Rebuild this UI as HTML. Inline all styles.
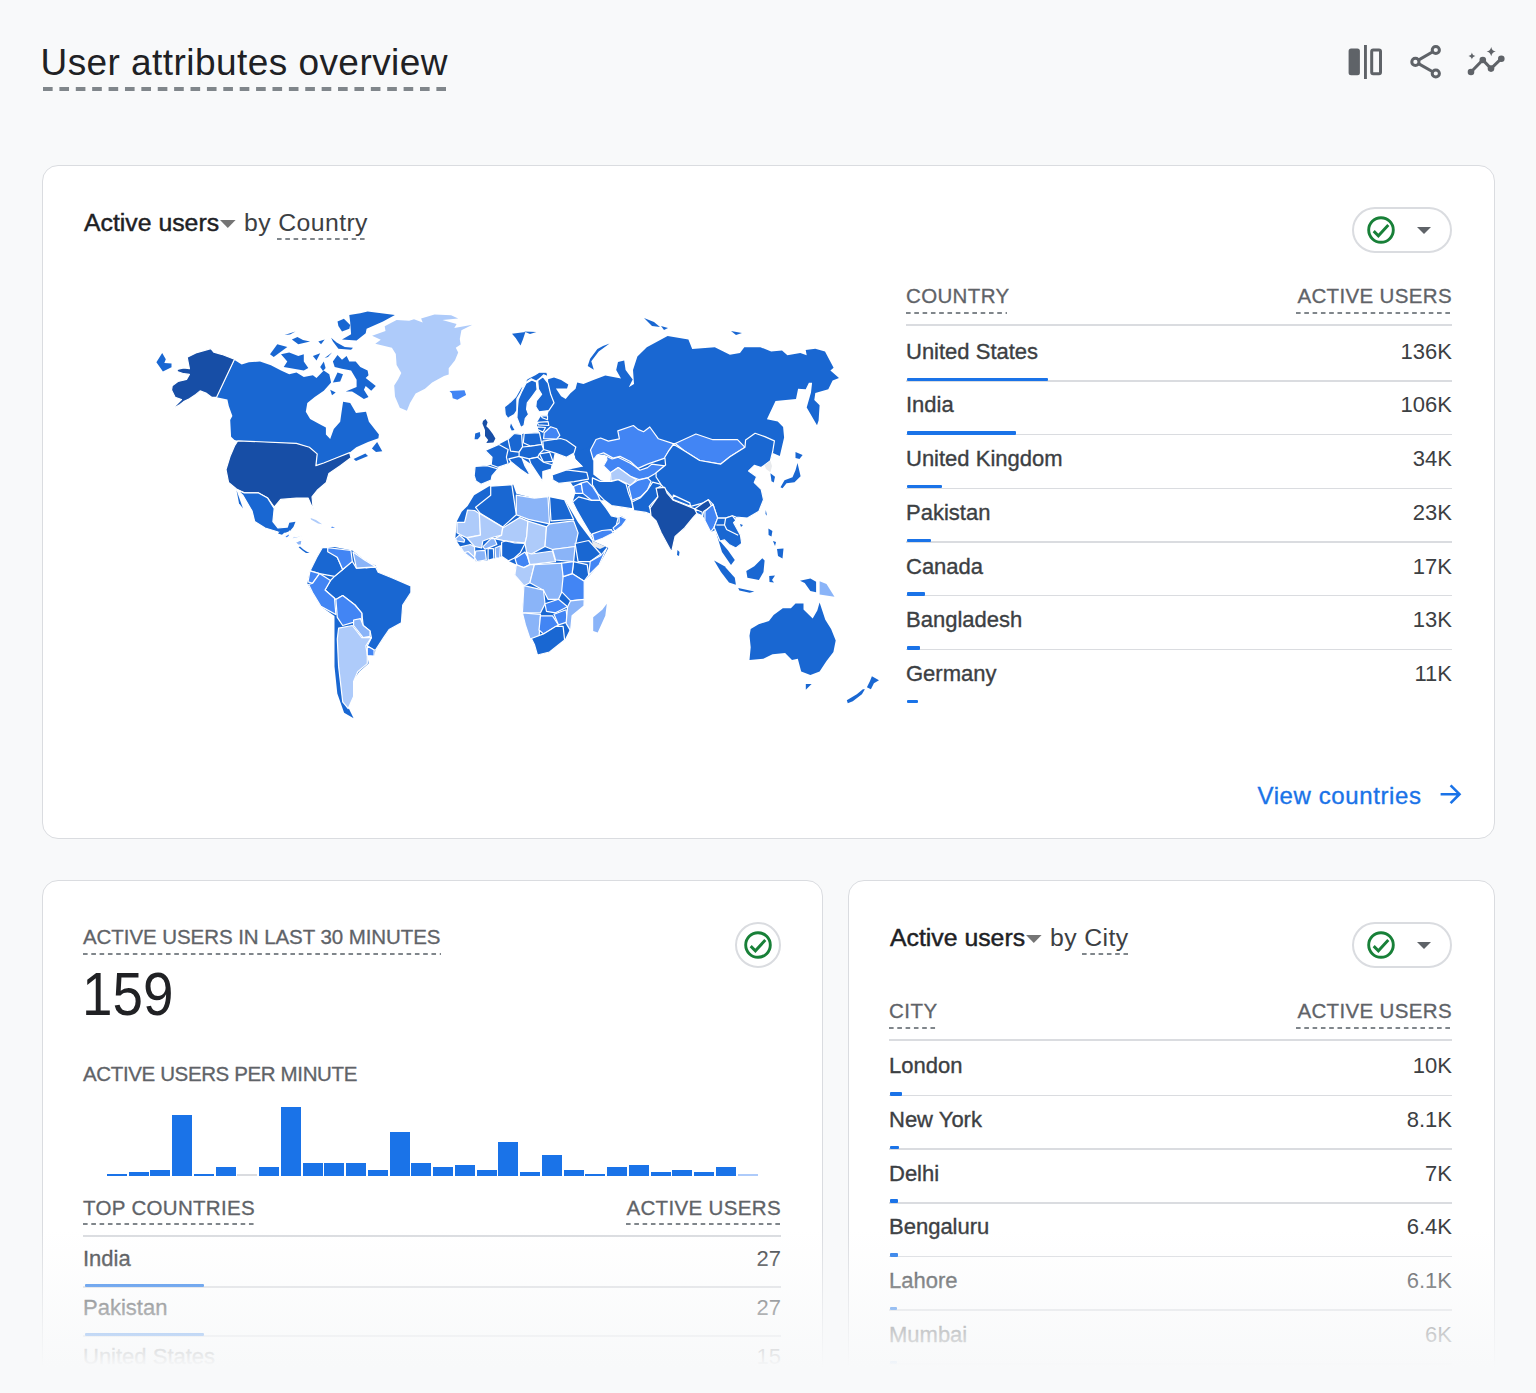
<!DOCTYPE html>
<html><head><meta charset="utf-8">
<style>
*{margin:0;padding:0;box-sizing:border-box}
html,body{width:1536px;height:1393px;overflow:hidden;background:#f8f9fa;font-family:"Liberation Sans",sans-serif;position:relative}
.a{position:absolute;white-space:nowrap}
.card{position:absolute;background:#fff;border:1.5px solid #dadce0;border-radius:16px}
.dash{position:absolute;height:2px;background:linear-gradient(to right,#80868b 5px,transparent 5px) repeat-x;background-size:8.3px 2px}
.hline{position:absolute;height:1.5px;background:#dadce0}
.bar{position:absolute;height:3.5px;background:#1a73e8;border-radius:1px}
.hdr{font-size:20.5px;letter-spacing:0.35px;color:#5f6368;line-height:24px;-webkit-text-stroke:0.3px #5f6368}
.row{font-size:22px;color:#3c4043;line-height:26px;-webkit-text-stroke:0.35px #3c4043}
.val{font-size:22px;color:#3c4043;line-height:26px}
.ttl{font-size:24.8px;color:#202124;line-height:28px}
</style></head><body>

<!-- page title -->
<div class="a" id="title" style="left:40.5px;top:41px;font-size:37px;letter-spacing:0.44px;color:#202124;line-height:44px">User attributes overview</div>
<div class="a" style="left:43px;top:87px;width:405px;height:4px;background:linear-gradient(to right,#80868b 10px,transparent 10px) repeat-x;background-size:16.4px 4px"></div>

<!-- header icons -->
<svg class="a" style="left:1340px;top:40px" width="180" height="45" viewBox="1340 40 180 45">
 <g fill="#5f6368">
  <rect x="1348.6" y="48.6" width="11.3" height="26.6" rx="2.5"/>
  <rect x="1364" y="45" width="2.9" height="34"/>
  <rect x="1371.7" y="50.1" width="8.8" height="23.6" rx="1.5" fill="none" stroke="#5f6368" stroke-width="3"/>
 </g>
 <g stroke="#5f6368" stroke-width="3" fill="none">
  <line x1="1415.4" y1="61.9" x2="1435.8" y2="50"/>
  <line x1="1415.4" y1="61.9" x2="1435.8" y2="73.5"/>
  <circle cx="1435.8" cy="50" r="3.6" fill="#f8f9fa"/>
  <circle cx="1415.4" cy="61.9" r="3.6" fill="#f8f9fa"/>
  <circle cx="1435.8" cy="73.5" r="3.6" fill="#f8f9fa"/>
 </g>
 <g fill="#5f6368">
  <polyline points="1471,72 1482.8,60 1491,68.6 1501.3,58.7" fill="none" stroke="#5f6368" stroke-width="3"/>
  <circle cx="1471" cy="72" r="3.3"/><circle cx="1482.8" cy="60" r="3.3"/><circle cx="1491" cy="68.6" r="3.3"/><circle cx="1501.3" cy="58.7" r="3.3"/>
  <path d="M1491.2 47 Q1492 51 1495.8 51.6 Q1492 52.4 1491.2 56.2 Q1490.4 52.4 1486.6 51.6 Q1490.4 51 1491.2 47Z"/>
  <path d="M1471.9 52.5 Q1472.4 55.5 1475.4 56 Q1472.4 56.5 1471.9 59.5 Q1471.4 56.5 1468.4 56 Q1471.4 55.5 1471.9 52.5Z"/>
 </g>
</svg>

<!-- CARD 1 -->
<div class="card" style="left:42px;top:165px;width:1453px;height:674px"></div>
<svg class="a" style="left:220px;top:220px" width="15.6" height="8" viewBox="0 0 15.6 8"><path d="M0 0H15.6L7.8 8Z" fill="#757575"/></svg>
<div class="a ttl" id="t1" style="left:84px;top:209.1px;-webkit-text-stroke:0.45px #202124">Active users</div>
<div class="a ttl" id="t1b" style="left:244px;top:209.1px;color:#3c4043;letter-spacing:0.4px">by Country</div>
<div class="dash" style="left:277px;top:238px;width:91px"></div>

<!-- pill -->
<div class="a" style="left:1352px;top:207px;width:100px;height:46px;border:2px solid #dadce0;border-radius:23px"></div>

<svg class="a" style="left:1364.5px;top:213.7px" width="32" height="32" viewBox="1364.5 213.7 32 32"><circle cx="1380.5" cy="229.7" r="12.3" fill="none" stroke="#188038" stroke-width="2.9"/><polyline points="1373.2,230.79999999999998 1377.9,235.5 1387.8,224.79999999999998" fill="none" stroke="#188038" stroke-width="2.9"/></svg><svg class="a" style="left:1417px;top:227px" width="14" height="7" viewBox="0 0 14 7"><path d="M0 0H14L7.0 7Z" fill="#5f6368"/></svg>
<svg class="a" style="left:130px;top:290px" width="760" height="440" viewBox="130 290 760 440">
<polygon fill="#1967d2" points="234.5,360.0 241.7,364.4 248.9,362.2 260.0,361.5 270.9,365.2 281.0,370.6 289.2,374.3 296.5,372.4 303.8,377.0 312.9,375.2 316.5,377.9 323.8,370.6 329.3,374.3 331.1,382.5 323.8,390.7 314.7,397.1 307.3,403.1 305.8,411.7 310.1,418.9 320.2,424.6 325.9,427.5 325.9,434.6 330.2,438.9 333.8,428.9 340.2,421.7 341.6,411.7 343.1,401.7 350.2,403.1 356.0,413.1 366.0,411.7 368.9,421.7 378.9,434.6 378.4,438.2 368.0,442.1 356.3,447.3 349.7,452.6 336.7,457.8 323.7,463.0 315.9,465.6 317.2,453.9 309.4,447.3 296.4,443.4 237.8,440.8 234.5,440.0 231.1,436.7 230.2,420.0 232.4,415.9 228.8,405.9 227.4,399.5 216.6,397.3"/>
<polygon fill="#1967d2" points="353.6,459.0 365.4,453.5 368.0,456.0 356.0,461.0"/>
<polygon fill="#1967d2" points="371.9,448.6 377.1,442.1 382.3,451.2 376.0,452.0"/>
<polygon fill="#1967d2" points="332.9,361.5 337.5,355.1 342.0,359.7 346.6,356.0 349.3,361.5 355.7,361.5 360.3,367.0 367.6,370.6 368.5,375.2 365.7,377.9 375.8,386.1 371.2,390.7 365.7,386.1 363.9,389.8 368.5,397.1 363.9,398.9 356.6,394.3 352.1,391.6 345.7,391.6 356.6,387.0 356.6,379.7 351.1,370.6 342.0,368.8 334.7,367.0"/>
<polygon fill="#1967d2" points="349.3,315.0 360.3,313.2 367.6,311.4 394.9,315.0 383.0,321.4 366.6,328.7 365.7,333.3 356.6,340.5 342.0,339.6 351.1,334.2 350.2,322.3"/>
<polygon fill="#1967d2" points="337.5,321.4 343.9,318.7 350.2,325.1 349.3,328.7 342.0,331.4 338.4,326.0"/>
<polygon fill="#1967d2" points="331.1,337.8 336.6,342.4 344.8,346.9 353.0,347.8 351.1,349.7 338.4,348.8 332.9,341.5"/>
<polygon fill="#1967d2" points="281.0,354.2 289.2,352.4 298.3,356.0 303.8,354.2 303.8,361.5 308.3,367.9 303.8,370.6 283.7,367.0 287.3,361.5"/>
<polygon fill="#1967d2" points="270.0,354.2 277.3,344.2 287.3,346.9 273.7,357.0"/>
<polygon fill="#1967d2" points="284.6,335.1 295.5,331.4 290.0,334.5"/>
<polygon fill="#1967d2" points="291.9,339.6 297.4,336.9 303.0,340.0 310.1,341.5 298.3,344.2"/>
<polygon fill="#1967d2" points="318.3,341.5 324.7,339.6 321.1,344.2"/>
<polygon fill="#1967d2" points="312.9,356.0 320.2,353.3 316.5,360.6"/>
<polygon fill="#1967d2" points="324.7,357.9 332.0,352.4 328.0,357.0"/>
<polygon fill="#1967d2" points="320.2,367.0 323.8,361.5 325.6,367.9 323.0,371.0"/>
<polygon fill="#1967d2" points="337.5,372.4 343.0,374.3 340.2,381.6 332.9,382.5"/>
<polygon fill="#1967d2" points="330.2,389.8 335.7,392.5 332.0,395.2"/>
<polygon fill="#174ea6" stroke="#fff" stroke-width="1.2" stroke-linejoin="round" points="187.2,357.2 195.8,352.9 210.9,348.6 213.8,352.2 221.6,354.3 234.5,359.3 216.6,397.3 211.6,397.3 205.9,393.0 200.1,390.9 195.8,394.4 189.4,398.7 183.7,401.6 180.1,404.5 171.5,409.5 181.5,399.5 175.1,397.3 171.5,390.1 172.2,385.8 177.9,381.5 186.5,379.4 189.4,374.4 183.7,373.7 177.2,371.5 177.2,369.4 183.7,368.0 189.4,368.6 188.0,361.5"/>
<polygon fill="#1967d2" points="162.2,352.9 165.8,359.3 164.3,362.9 171.5,363.6 171.5,367.2 162.9,371.5 156.4,362.2"/>
<polygon fill="#174ea6" stroke="#fff" stroke-width="1.2" stroke-linejoin="round" points="237.8,440.8 296.4,443.4 309.4,447.3 317.2,453.9 315.9,465.6 323.7,463.0 336.7,457.8 349.7,452.6 351.0,457.8 340.6,465.6 328.9,473.4 326.3,482.5 317.2,490.3 312.0,496.8 313.3,509.8 308.1,498.1 296.4,498.1 280.7,499.4 274.2,507.2 267.7,498.1 258.6,492.9 244.3,492.9 236.5,489.0 228.6,482.5 226.0,469.5 230.0,456.5 234.5,446.0"/>
<polygon fill="#1967d2" stroke="#fff" stroke-width="1.2" stroke-linejoin="round" points="237.8,490.3 244.3,492.9 258.6,492.9 267.7,498.1 274.2,508.5 272.9,521.6 278.1,528.0 289.8,526.8 295.0,521.6 291.1,530.7 285.9,533.3 278.1,532.0 265.1,528.0 254.7,521.6 252.1,511.1 243.0,495.5"/>
<polygon fill="#1967d2" points="236.5,490.3 243.0,508.5 239.0,503.3"/>
<polygon fill="#1967d2" points="289.3,522.7 295.5,521.7 293.4,526.9 289.8,531.0 285.1,532.1 282.0,534.7 278.0,533.5 281.0,530.0 287.7,527.9"/>
<polygon fill="#4285f4" stroke="#fff" stroke-width="1.2" stroke-linejoin="round" points="284.6,536.2 288.2,534.2 289.8,531.0 289.3,536.2 286.7,538.3"/>
<polygon fill="#8ab4f8" stroke="#fff" stroke-width="1.2" stroke-linejoin="round" points="291.4,537.3 301.2,535.7 301.2,536.8 293.4,538.9"/>
<polygon fill="#8ab4f8" stroke="#fff" stroke-width="1.2" stroke-linejoin="round" points="295.5,542.5 302.3,538.9 301.2,545.1 298.1,545.1"/>
<polygon fill="#1967d2" points="298.6,547.2 300.0,546.5 303.5,549.5 306.5,551.5 309.6,552.9 306.0,553.0 302.8,550.8"/>
<polygon fill="#aecbfa" points="310.6,518.0 316.0,520.0 322.1,524.3 318.0,523.5 311.0,519.5"/>
<polygon fill="#4285f4" points="332.0,526.4 335.1,527.9 331.0,527.8"/>
<polygon fill="#aecbfa" points="372.1,335.8 385.5,331.1 384.7,326.3 396.6,320.0 409.2,320.8 414.0,319.2 422.7,322.4 421.1,318.4 434.5,314.5 451.1,315.3 458.2,318.4 442.4,320.0 456.6,324.0 454.3,327.9 472.4,324.7 461.4,330.3 459.8,339.0 460.6,344.5 455.8,347.7 458.2,352.4 455.0,360.3 448.7,368.2 448.7,374.5 444.0,376.1 432.1,382.4 425.0,388.7 415.6,393.5 410.0,403.0 406.9,410.8 399.8,407.7 395.0,396.6 394.2,385.6 398.2,379.2 401.3,372.9 396.6,365.0 395.8,354.0 391.9,347.7 375.3,343.7 380.8,339.8"/>
<polygon fill="#4285f4" points="449.5,391.1 464.5,390.3 466.1,395.0 457.4,399.8 452.7,398.2 451.9,393.5"/>
<polygon fill="#1967d2" points="322.3,547.7 334.5,547.0 352.3,550.5 364.5,560.0 375.5,565.5 378.2,572.3 391.8,577.7 410.9,585.9 410.9,592.7 402.7,605.0 401.4,622.7 389.1,629.5 383.6,637.7 375.5,650.0 374.1,655.5 367.3,655.5 368.6,663.6 359.1,671.8 353.6,680.0 352.3,693.6 348.2,707.3 353.6,718.2 344.1,712.7 337.3,693.6 334.5,666.4 334.5,639.0 334.5,615.9 320.9,606.4 312.7,592.7 307.3,583.2 310.0,570.9 316.8,557.3"/>
<polygon fill="#1967d2" stroke="#fff" stroke-width="1.2" stroke-linejoin="round" points="342.7,569.5 352.3,561.4 356.4,568.2 375.5,566.8 378.2,572.3 391.8,577.7 410.9,585.9 410.9,592.7 402.7,605.0 401.4,622.7 389.1,629.5 383.6,637.7 375.5,650.0 374.1,650.0 367.3,645.9 371.4,637.7 370.0,630.9 363.2,625.5 361.8,613.2 355.0,605.0 342.7,595.5 335.9,599.5 325.0,590.0 330.5,580.5 334.5,576.4"/>
<polygon fill="#1967d2" stroke="#fff" stroke-width="1.2" stroke-linejoin="round" points="316.8,557.3 322.3,547.7 327.7,547.7 337.3,557.3 342.7,569.5 334.5,576.4 319.5,573.6 310.0,570.9"/>
<polygon fill="#aecbfa" stroke="#fff" stroke-width="1.2" stroke-linejoin="round" points="364.0,558.0 371.0,563.0 375.5,566.8 366.0,568.0"/>
<polygon fill="#4285f4" stroke="#fff" stroke-width="1.2" stroke-linejoin="round" points="327.7,547.7 350.9,550.5 352.3,561.4 342.7,569.5 337.3,557.3 327.7,551.8"/>
<polygon fill="#8ab4f8" stroke="#fff" stroke-width="1.2" stroke-linejoin="round" points="353.0,552.0 364.5,560.0 375.5,566.8 356.4,568.2"/>
<polygon fill="#4285f4" stroke="#fff" stroke-width="1.2" stroke-linejoin="round" points="310.0,570.9 319.5,573.6 312.7,583.2 308.0,581.8"/>
<polygon fill="#4285f4" stroke="#fff" stroke-width="1.2" stroke-linejoin="round" points="319.5,573.6 330.5,580.5 325.0,590.0 334.5,598.2 335.9,614.5 320.9,606.4 312.7,592.7 308.6,584.5 312.7,583.2"/>
<polygon fill="#4285f4" stroke="#fff" stroke-width="1.2" stroke-linejoin="round" points="335.9,599.5 342.7,595.5 355.0,605.0 361.8,613.2 361.8,622.7 352.3,622.7 342.7,625.5 337.3,617.3"/>
<polygon fill="#8ab4f8" stroke="#fff" stroke-width="1.2" stroke-linejoin="round" points="353.6,620.0 360.5,618.6 363.2,625.5 370.0,630.9 370.0,636.4 363.2,637.7 353.6,625.5"/>
<polygon fill="#aecbfa" stroke="#fff" stroke-width="1.2" stroke-linejoin="round" points="338.6,628.2 352.3,625.5 361.8,637.7 371.4,637.7 365.9,645.9 367.3,655.5 367.3,663.6 357.7,671.8 353.6,681.4 353.6,696.4 348.2,708.6 342.7,701.8 338.6,666.4 337.3,639.0"/>
<polygon fill="#4285f4" stroke="#fff" stroke-width="1.2" stroke-linejoin="round" points="367.3,645.9 374.1,650.0 374.1,656.1 367.3,655.5"/>
<polygon fill="#1967d2" points="548.1,379.3 554.0,377.4 561.1,380.0 568.3,384.5 567.0,388.4 555.9,388.4 561.1,396.2 565.7,398.9 570.2,393.4 575.6,388.8 577.2,382.5 583.4,384.0 592.8,380.2 605.3,375.5 621.0,378.6 616.2,370.0 618.0,362.0 624.2,360.4 625.6,370.0 632.7,379.4 628.8,387.2 634.0,384.0 633.0,370.0 637.4,356.6 646.8,347.2 667.6,335.9 688.4,339.6 692.2,349.1 714.8,347.2 729.9,354.7 740.0,353.1 744.3,347.2 760.4,347.2 771.2,351.5 782.0,350.4 787.4,355.3 800.3,353.1 806.7,355.3 805.7,349.9 815.3,348.8 825.0,351.5 833.6,367.7 830.4,370.4 839.0,377.9 832.6,380.6 828.3,389.2 815.3,393.0 814.3,400.0 819.6,405.3 818.6,420.4 817.0,425.3 806.7,407.5 811.0,392.4 812.1,382.7 808.9,382.7 805.7,389.2 798.1,388.7 796.0,398.9 775.5,401.0 766.9,419.3 777.7,421.5 783.1,426.9 784.1,437.6 779.8,455.9 772.3,452.7 772.7,451.5 770.4,460.7 761.2,467.6 754.3,465.3 748.6,471.0 756.6,476.8 754.3,482.5 761.2,489.4 763.5,499.7 758.9,511.2 747.4,518.1 735.9,517.0 733.6,522.7 740.5,535.3 741.7,543.4 735.9,548.0 729.0,544.5 724.5,539.9 719.9,541.0 727.9,550.2 734.8,560.0 731.0,565.0 722.0,552.0 715.3,530.0 710.7,531.9 704.9,519.2 701.5,513.5 696.9,513.5 693.2,517.5 684.6,527.9 675.1,536.5 671.6,552.0 661.3,533.0 656.1,521.0 652.7,515.0 645.8,512.4 633.8,510.6 632.9,508.9 621.7,507.2 611.4,505.5 604.5,500.3 606.2,508.1 611.4,515.8 618.2,517.5 620.8,515.8 626.9,519.2 621.7,526.1 614.8,531.3 613.1,533.0 602.7,538.2 594.1,541.6 589.0,531.3 582.9,521.0 576.9,510.6 572.6,502.0 575.2,493.4 573.4,486.5 570.0,481.4 570.0,471.0 558.9,483.4 552.9,480.0 552.1,474.9 566.5,469.9 583.4,466.5 575.8,459.0 574.1,452.9 566.5,457.2 554.6,452.9 552.9,461.4 552.1,464.8 551.3,469.0 542.8,471.6 542.8,481.7 537.7,474.1 530.9,463.9 522.0,458.0 525.0,466.0 529.2,473.2 528.4,474.9 519.9,469.0 512.0,462.0 510.6,461.4 508.1,463.9 497.9,467.3 497.9,469.0 492.0,475.8 491.2,480.0 481.0,484.2 475.9,480.9 474.2,475.8 475.1,466.5 486.9,465.6 491.2,464.8 492.0,457.2 485.2,450.4 498.8,444.5 508.1,439.4 514.0,433.5 521.6,434.3 524.2,433.5 539.4,432.6 537.1,426.8 537.1,422.3 541.0,415.8 547.5,415.8 548.8,410.6 554.0,402.8 550.7,394.3 548.1,383.2"/>
<polygon fill="#1967d2" points="574.0,452.9 591.0,446.0 597.0,455.0 593.3,459.8 593.3,474.5 592.4,477.9 588.5,479.2 586.8,472.4 583.4,466.5 575.8,459.0"/>
<polygon fill="#ffffff" points="593.3,459.8 597.0,455.0 605.3,454.6 607.0,459.8 603.6,465.8 610.5,472.7 610.5,482.2 601.0,480.5 593.3,474.5"/>
<polygon fill="#ffffff" points="600.2,500.3 604.5,500.3 611.4,505.5 618.0,507.0 614.0,511.0 611.4,515.8 606.2,508.1"/>
<polygon fill="#1967d2" stroke="#fff" stroke-width="1.2" stroke-linejoin="round" points="504.5,406.7 510.4,402.1 515.6,396.9 520.8,387.8 527.3,378.7 535.1,374.8 539.0,372.2 546.8,372.2 548.1,376.7 543.6,374.8 541.0,377.4 536.4,381.3 531.2,378.7 524.7,383.2 520.8,392.3 516.9,398.9 516.9,410.6 514.3,414.5 507.8,418.4 505.2,414.5"/>
<polygon fill="#1967d2" stroke="#fff" stroke-width="1.2" stroke-linejoin="round" points="518.2,399.5 521.4,392.3 526.0,383.2 531.8,380.0 536.4,381.9 537.1,389.7 533.2,395.0 527.3,402.8 526.6,409.3 528.6,414.5 525.3,418.4 524.0,425.5 520.8,427.5 516.9,417.7 517.5,407.3"/>
<polygon fill="#1967d2" stroke="#fff" stroke-width="1.2" stroke-linejoin="round" points="537.7,380.6 542.9,376.7 548.1,383.2 550.7,394.3 554.0,402.8 548.8,410.6 539.0,411.9 535.8,406.7 536.4,400.8 541.6,394.3 538.4,389.1"/>
<polygon fill="#1967d2" points="511.0,423.6 513.0,427.5 514.5,430.0 511.7,430.5 510.0,427.0"/>
<polygon fill="#1967d2" stroke="#fff" stroke-width="1.2" stroke-linejoin="round" points="541.0,415.8 547.5,415.8 547.5,419.7 542.3,417.7"/>
<polygon fill="#1967d2" stroke="#fff" stroke-width="1.2" stroke-linejoin="round" points="537.1,422.3 548.1,421.6 548.8,425.5 538.4,424.9"/>
<polygon fill="#1967d2" stroke="#fff" stroke-width="1.2" stroke-linejoin="round" points="537.1,426.8 545.5,427.5 542.9,432.1 537.7,429.5"/>
<polygon fill="#1967d2" stroke="#fff" stroke-width="1.2" stroke-linejoin="round" points="485.2,450.4 498.8,444.5 508.1,449.5 506.4,457.2 508.1,463.9 497.9,467.3 491.2,464.8 492.0,457.2"/>
<polygon fill="#1967d2" stroke="#fff" stroke-width="1.2" stroke-linejoin="round" points="475.1,466.5 486.9,465.6 497.9,469.0 492.0,475.8 491.2,480.0 481.0,484.2 475.9,480.9 474.2,475.8"/>
<polygon fill="#1967d2" stroke="#fff" stroke-width="1.2" stroke-linejoin="round" points="508.1,439.4 514.0,433.5 521.6,434.3 522.5,447.0 519.1,452.1 510.6,451.2"/>
<polygon fill="#1967d2" stroke="#fff" stroke-width="1.2" stroke-linejoin="round" points="524.2,433.5 539.4,432.6 541.9,444.5 530.9,446.2 523.3,442.8"/>
<polygon fill="#1967d2" stroke="#fff" stroke-width="1.2" stroke-linejoin="round" points="542.8,441.1 560.6,438.5 566.2,440.3 575.8,447.0 574.1,452.9 566.5,457.2 554.6,452.9 543.6,449.5"/>
<polygon fill="#1967d2" stroke="#fff" stroke-width="1.2" stroke-linejoin="round" points="539.4,453.8 549.6,452.1 552.9,461.4 543.6,462.2"/>
<polygon fill="#1967d2" stroke="#fff" stroke-width="1.2" stroke-linejoin="round" points="508.9,458.9 519.1,456.3 522.0,458.0 525.0,466.0 529.2,473.2 528.4,474.9 519.9,469.0 510.6,461.4"/>
<polygon fill="#1967d2" stroke="#fff" stroke-width="1.2" stroke-linejoin="round" points="522.5,447.0 530.9,446.2 541.9,444.5 543.6,449.5 539.4,453.8 537.7,457.2 529.2,458.9 519.1,456.3 519.1,452.1"/>
<polygon fill="#1967d2" stroke="#fff" stroke-width="1.2" stroke-linejoin="round" points="529.2,458.9 537.7,457.2 543.6,462.2 552.1,464.8 551.3,469.0 542.8,471.6 542.8,481.7 537.7,474.1 530.9,463.9"/>
<polygon fill="#1967d2" stroke="#fff" stroke-width="1.2" stroke-linejoin="round" points="552.1,474.9 566.5,469.9 586.8,472.4 588.5,479.2 574.1,481.7 558.9,483.4 552.9,480.0"/>
<polygon fill="#174ea6" points="483.0,421.0 485.6,419.0 487.6,422.3 486.3,426.2 488.9,428.8 492.8,434.0 495.4,438.6 493.4,442.5 486.3,443.1 488.2,439.9 485.0,436.0 485.0,430.1 482.4,423.6"/>
<polygon fill="#1967d2" points="475.2,433.4 479.8,432.1 480.4,436.0 477.8,439.2 474.6,439.2"/>
<polygon fill="#1967d2" points="512.0,333.8 525.4,332.0 523.0,339.3 520.5,345.4 515.7,338.0"/>
<polygon fill="#1967d2" points="524.2,331.4 536.4,332.0 530.0,334.0"/>
<polygon fill="#1967d2" points="609.6,343.6 603.0,346.0 597.4,349.0 590.1,358.8 587.7,366.1 593.8,369.8 591.3,361.3 598.7,351.5"/>
<polygon fill="#1967d2" points="644.0,318.0 654.0,322.0 660.0,327.0 652.0,326.0"/>
<polygon fill="#1967d2" points="661.0,326.0 668.0,328.0 664.0,330.0"/>
<polygon fill="#1967d2" points="731.0,331.0 742.0,333.0 736.0,335.0"/>
<polygon fill="#4285f4" stroke="#fff" stroke-width="1.2" stroke-linejoin="round" points="544.2,432.7 550.7,426.8 556.6,428.8 559.8,435.3 556.6,439.2 543.6,438.6"/>
<polygon fill="#4285f4" stroke="#fff" stroke-width="1.2" stroke-linejoin="round" points="590.5,450.0 596.0,439.5 600.6,438.0 608.4,441.1 619.4,438.8 617.8,430.9 633.4,425.5 638.1,429.4 643.6,431.7 649.8,427.0 658.4,438.8 672.5,443.4 675.2,443.5 673.4,444.3 669.1,450.3 664.8,458.1 647.5,464.1 638.0,468.4 630.3,461.5 620.0,456.4 613.1,458.1 603.6,452.9 597.0,455.0 593.3,459.8"/>
<polygon fill="#4285f4" stroke="#fff" stroke-width="1.2" stroke-linejoin="round" points="606.0,456.0 612.2,459.0 618.2,457.2 630.3,463.3 635.5,466.7 639.8,470.2 647.5,467.6 651.8,464.1 664.8,465.8 657.9,471.9 647.5,477.9 638.9,479.6 630.3,476.2 618.2,467.6 610.5,472.7 603.6,465.8 607.0,459.8"/>
<polygon fill="#aecbfa" stroke="#fff" stroke-width="1.2" stroke-linejoin="round" points="610.5,472.7 618.2,467.6 630.3,476.2 636.3,479.6 630.3,485.6 626.0,483.1 618.2,479.6 611.0,481.0"/>
<polygon fill="#4285f4" stroke="#fff" stroke-width="1.2" stroke-linejoin="round" points="628.6,486.5 637.2,480.5 647.5,477.9 651.0,481.4 647.5,490.0 640.6,496.9 632.0,500.3"/>
<polygon fill="#1967d2" stroke="#fff" stroke-width="1.2" stroke-linejoin="round" points="592.4,477.9 600.2,481.4 611.4,481.4 618.2,479.6 626.0,483.9 628.6,493.4 632.0,502.0 632.9,508.9 621.7,507.2 611.4,505.5 604.5,500.3 597.6,493.4 592.4,484.8"/>
<polygon fill="#1967d2" stroke="#fff" stroke-width="1.2" stroke-linejoin="round" points="632.0,502.0 640.6,497.7 647.5,490.0 652.7,482.2 663.0,484.8 657.0,488.2 658.7,496.0 649.2,506.3 652.7,515.0 645.8,512.4 633.8,510.6"/>
<polygon fill="#4285f4" stroke="#fff" stroke-width="1.2" stroke-linejoin="round" points="675.2,443.5 695.9,434.0 712.9,439.7 737.5,439.7 745.0,447.3 729.9,456.7 720.5,464.2 699.7,460.5 684.6,451.0"/>
<polygon fill="#1967d2" stroke="#fff" stroke-width="1.2" stroke-linejoin="round" points="673.4,444.3 684.6,451.0 699.7,460.5 720.5,464.2 729.9,456.7 745.0,447.3 745.6,440.0 755.1,433.3 764.8,436.6 774.4,440.9 772.7,451.5 770.4,460.7 761.2,467.6 754.3,465.3 748.6,471.0 756.6,476.8 754.3,482.5 761.2,489.4 763.5,499.7 758.9,511.2 747.4,518.1 735.9,517.0 732.5,515.8 725.6,518.1 717.6,518.1 713.0,504.3 708.4,499.7 702.6,503.2 690.6,506.3 673.4,498.6 667.3,491.7 661.3,484.8 656.1,477.0 656.1,472.7 665.6,465.0 664.8,457.2 669.1,450.3"/>
<polygon fill="#174ea6" stroke="#fff" stroke-width="1.2" stroke-linejoin="round" points="656.1,488.2 664.8,487.4 667.3,493.4 673.4,500.3 690.6,507.2 694.6,508.9 702.6,503.2 708.4,499.7 711.8,506.6 703.8,511.2 702.6,515.8 696.9,513.5 693.2,517.5 684.6,527.9 675.1,536.5 671.6,552.0 661.3,533.0 656.1,521.0 651.0,515.8 650.1,508.1 657.9,496.9"/>
<polygon fill="#1967d2" stroke="#fff" stroke-width="1.2" stroke-linejoin="round" points="672.5,499.4 690.6,506.3 689.8,502.9 673.4,495.1"/>
<polygon fill="#1967d2" stroke="#fff" stroke-width="1.2" stroke-linejoin="round" points="694.6,509.0 702.0,512.0 702.6,515.8 696.9,513.5"/>
<polygon fill="#4285f4" stroke="#fff" stroke-width="1.2" stroke-linejoin="round" points="704.9,511.2 713.0,504.3 717.6,518.1 714.1,527.3 710.7,531.9 704.9,520.4"/>
<polygon fill="#1967d2" stroke="#fff" stroke-width="1.2" stroke-linejoin="round" points="717.6,518.1 725.6,518.1 732.5,515.8 735.9,520.4 733.6,522.7 740.5,535.3 741.7,543.4 735.9,548.0 729.0,544.5 724.5,539.9 719.9,541.0 715.3,530.0 714.1,527.3"/>
<polygon fill="#e8eaed" points="764.6,465.3 770.4,460.7 772.0,466.0 770.4,472.2 766.0,469.0"/>
<polygon fill="#1967d2" points="770.4,473.3 775.0,476.8 773.8,482.5 771.5,481.3"/>
<polygon fill="#1967d2" points="795.5,452.0 802.6,455.1 799.5,459.1 795.5,458.1"/>
<polygon fill="#1967d2" points="797.5,463.1 800.6,476.2 794.5,482.2 786.5,483.2 782.5,488.2 780.5,487.2 784.5,480.2 792.5,477.2 795.5,470.2"/>
<polygon fill="#1967d2" points="765.8,510.0 767.0,515.8 765.5,514.0"/>
<polygon fill="#1967d2" points="740.0,524.0 743.0,525.0 741.0,527.0"/>
<polygon fill="#1967d2" points="677.5,550.0 679.5,552.0 679.0,556.0 677.0,555.0"/>
<polygon fill="#4285f4" stroke="#fff" stroke-width="1.2" stroke-linejoin="round" points="573.4,486.5 581.2,483.1 582.9,493.4 575.2,493.4"/>
<polygon fill="#4285f4" stroke="#fff" stroke-width="1.2" stroke-linejoin="round" points="581.2,483.1 587.2,481.4 592.4,486.5 597.6,494.3 600.2,500.3 591.5,500.3 582.9,493.4"/>
<polygon fill="#1967d2" stroke="#fff" stroke-width="1.2" stroke-linejoin="round" points="572.6,502.0 578.6,496.9 591.5,500.3 600.2,500.3 606.2,508.1 611.4,515.8 618.2,517.5 614.8,531.3 602.7,533.0 593.3,537.3 589.0,531.3 582.9,521.0 576.9,510.6"/>
<polygon fill="#4285f4" stroke="#fff" stroke-width="1.2" stroke-linejoin="round" points="592.4,533.9 601.9,530.5 611.4,529.6 613.1,533.0 602.7,538.2 594.1,541.6"/>
<polygon fill="#4285f4" stroke="#fff" stroke-width="1.2" stroke-linejoin="round" points="619.1,515.8 626.9,519.2 621.7,526.1 614.8,531.3 613.1,527.9 619.1,522.7"/>
<polygon fill="#1967d2" points="474.1,495.2 489.2,486.2 513.3,484.7 516.3,493.7 534.4,498.2 548.0,496.7 564.6,499.7 578.1,522.4 591.7,540.5 605.3,546.5 608.3,548.0 599.3,564.6 582.7,582.7 584.2,599.3 572.1,609.8 570.6,627.9 564.6,640.0 549.5,652.0 537.4,655.0 534.4,644.5 526.9,624.9 522.4,612.8 523.9,585.7 514.8,575.1 516.3,564.6 508.6,560.9 501.6,556.2 493.9,558.6 488.1,560.3 476.9,561.5 475.2,560.9 464.1,552.7 460.5,546.9 455.3,538.7 457.0,521.1 461.7,511.7 467.6,505.9"/>
<polygon fill="#8ab4f8" stroke="#fff" stroke-width="1.2" stroke-linejoin="round" points="516.3,495.2 534.4,498.2 548.0,496.7 549.5,523.9 528.4,519.4 516.3,514.8"/>
<polygon fill="#1967d2" stroke="#fff" stroke-width="1.2" stroke-linejoin="round" points="549.5,496.7 564.6,499.7 573.6,519.4 551.0,520.9"/>
<polygon fill="#1967d2" stroke="#fff" stroke-width="1.2" stroke-linejoin="round" points="490.7,486.2 511.8,484.7 516.3,514.8 502.8,526.9 480.2,513.3 475.6,507.3 490.7,495.2"/>
<polygon fill="#aecbfa" stroke="#fff" stroke-width="1.2" stroke-linejoin="round" points="457.0,522.3 464.6,522.3 467.6,510.0 474.6,510.5 479.3,513.5 480.5,535.1 466.4,537.5 460.0,534.6 457.0,532.8"/>
<polygon fill="#aecbfa" stroke="#fff" stroke-width="1.2" stroke-linejoin="round" points="479.3,513.5 480.5,514.0 502.7,527.2 501.6,535.1 492.2,537.5 482.8,541.0 481.6,548.0 474.6,546.3 467.0,538.0 480.5,535.1"/>
<polygon fill="#aecbfa" stroke="#fff" stroke-width="1.2" stroke-linejoin="round" points="502.7,528.1 519.7,517.6 527.9,521.1 526.7,536.3 525.0,542.8 514.4,542.2 502.7,540.4 494.5,538.7 501.6,535.1"/>
<polygon fill="#aecbfa" stroke="#fff" stroke-width="1.2" stroke-linejoin="round" points="527.9,521.1 546.5,526.9 545.0,546.5 531.4,554.0 527.3,556.2 525.0,543.4 526.7,536.3"/>
<polygon fill="#8ab4f8" stroke="#fff" stroke-width="1.2" stroke-linejoin="round" points="549.5,523.9 573.6,520.9 578.1,532.9 575.1,546.5 552.5,549.5 545.0,546.5 546.5,526.9"/>
<polygon fill="#8ab4f8" stroke="#fff" stroke-width="1.2" stroke-linejoin="round" points="482.8,546.9 491.0,538.7 494.5,538.7 496.9,544.5 491.0,546.9 485.1,549.2"/>
<polygon fill="#8ab4f8" stroke="#fff" stroke-width="1.2" stroke-linejoin="round" points="455.3,538.7 459.4,535.1 464.6,539.8 464.1,542.2 457.0,541.0"/>
<polygon fill="#aecbfa" stroke="#fff" stroke-width="1.2" stroke-linejoin="round" points="460.5,546.9 470.5,544.5 474.6,546.9 474.6,557.4 468.2,552.7 464.1,552.7"/>
<polygon fill="#8ab4f8" stroke="#fff" stroke-width="1.2" stroke-linejoin="round" points="464.1,552.7 468.2,551.5 474.6,557.4 475.2,560.9"/>
<polygon fill="#8ab4f8" stroke="#fff" stroke-width="1.2" stroke-linejoin="round" points="475.8,551.0 485.1,550.4 486.3,559.8 476.9,561.5 474.6,557.4"/>
<polygon fill="#1967d2" stroke="#fff" stroke-width="1.2" stroke-linejoin="round" points="488.1,548.6 493.4,548.6 493.9,558.6 488.1,560.3"/>
<polygon fill="#8ab4f8" stroke="#fff" stroke-width="1.2" stroke-linejoin="round" points="495.1,548.0 500.4,545.7 499.8,558.0 495.7,558.0"/>
<polygon fill="#1967d2" stroke="#fff" stroke-width="1.2" stroke-linejoin="round" points="501.6,542.2 505.6,541.0 514.4,542.8 525.0,543.4 520.3,552.7 514.4,558.0 508.6,560.9 501.6,556.2"/>
<polygon fill="#4285f4" stroke="#fff" stroke-width="1.2" stroke-linejoin="round" points="515.0,558.6 525.0,552.1 527.3,556.2 529.9,564.6 523.9,567.6 517.4,566.2"/>
<polygon fill="#aecbfa" stroke="#fff" stroke-width="1.2" stroke-linejoin="round" points="531.4,554.0 552.5,551.0 555.5,561.6 529.9,564.6 526.9,552.5"/>
<polygon fill="#aecbfa" stroke="#fff" stroke-width="1.2" stroke-linejoin="round" points="514.8,575.1 516.3,564.6 523.9,567.6 529.9,564.6 534.4,564.6 529.9,582.7 523.9,585.7"/>
<polygon fill="#1967d2" stroke="#fff" stroke-width="1.2" stroke-linejoin="round" points="575.1,543.5 588.7,540.5 600.8,554.0 590.2,561.6 578.1,561.6"/>
<polygon fill="#4285f4" stroke="#fff" stroke-width="1.2" stroke-linejoin="round" points="606.8,548.0 599.3,564.6 588.7,575.1 590.2,561.6 600.8,555.5"/>
<polygon fill="#e8eaed" points="591.7,540.5 605.3,546.5 600.0,549.0 593.0,546.0"/>
<polygon fill="#8ab4f8" stroke="#fff" stroke-width="1.2" stroke-linejoin="round" points="552.5,549.5 575.1,546.5 573.6,561.6 555.5,560.0"/>
<polygon fill="#8ab4f8" stroke="#fff" stroke-width="1.2" stroke-linejoin="round" points="534.4,564.6 561.6,563.1 564.6,585.7 558.5,599.3 548.0,599.3 543.5,590.2 529.9,582.7"/>
<polygon fill="#1967d2" stroke="#fff" stroke-width="1.2" stroke-linejoin="round" points="573.6,561.6 587.2,564.6 588.7,575.1 584.2,581.2 572.1,573.6"/>
<polygon fill="#4285f4" stroke="#fff" stroke-width="1.2" stroke-linejoin="round" points="563.1,576.6 572.1,573.6 584.2,581.2 584.2,599.3 570.6,600.8 561.6,591.7"/>
<polygon fill="#4285f4" stroke="#fff" stroke-width="1.2" stroke-linejoin="round" points="561.6,563.1 573.6,561.6 572.1,573.6 563.1,576.6"/>
<polygon fill="#8ab4f8" stroke="#fff" stroke-width="1.2" stroke-linejoin="round" points="523.9,585.7 543.5,590.2 545.0,603.8 540.5,612.8 522.4,612.8"/>
<polygon fill="#4285f4" stroke="#fff" stroke-width="1.2" stroke-linejoin="round" points="545.0,603.8 558.5,599.3 567.6,606.8 555.5,612.8 546.5,611.3"/>
<polygon fill="#8ab4f8" stroke="#fff" stroke-width="1.2" stroke-linejoin="round" points="522.4,612.8 540.5,614.3 539.0,638.5 529.9,638.5 525.4,624.9"/>
<polygon fill="#4285f4" stroke="#fff" stroke-width="1.2" stroke-linejoin="round" points="540.5,615.8 552.5,615.8 558.5,624.9 543.5,633.9 539.0,630.0"/>
<polygon fill="#4285f4" stroke="#fff" stroke-width="1.2" stroke-linejoin="round" points="554.0,614.3 566.1,609.8 567.6,621.9 558.5,624.9"/>
<polygon fill="#8ab4f8" stroke="#fff" stroke-width="1.2" stroke-linejoin="round" points="570.6,600.8 584.2,599.3 584.0,606.0 572.1,615.8 570.6,630.9 566.1,623.4 567.6,606.8"/>
<polygon fill="#1967d2" stroke="#fff" stroke-width="1.2" stroke-linejoin="round" points="531.4,638.5 543.5,633.9 555.5,626.4 563.1,626.4 564.6,640.0 549.5,652.0 537.4,655.0 534.4,644.5"/>
<polygon fill="#8ab4f8" points="606.8,603.8 605.3,615.8 597.7,632.4 593.2,630.9 593.2,617.3 602.3,609.8"/>
<polygon fill="#1967d2" points="714.1,560.6 724.5,566.3 734.8,577.8 735.9,584.7 729.0,582.4 721.0,572.1"/>
<polygon fill="#1967d2" points="738.2,588.1 754.3,591.6 749.7,592.7 739.4,590.4"/>
<polygon fill="#1967d2" points="746.3,570.9 754.3,566.3 762.3,558.3 764.6,560.6 763.5,572.1 758.9,580.1 747.4,577.8"/>
<polygon fill="#1967d2" points="769.2,576.0 775.0,575.5 772.0,580.0 774.0,582.4 769.5,582.0"/>
<polygon fill="#1967d2" points="768.4,528.4 772.4,531.0 771.5,536.5 768.6,535.0"/>
<polygon fill="#1967d2" points="773.0,541.0 776.0,542.0 775.0,546.0"/>
<polygon fill="#1967d2" points="777.0,549.0 783.5,548.5 782.5,558.6 778.0,556.0"/>
<polygon fill="#1967d2" points="800.0,580.7 810.4,578.4 816.1,581.8 816.1,592.2 810.4,591.0 804.7,583.0"/>
<polygon fill="#8ab4f8" points="819.6,581.2 826.5,584.1 834.5,596.8 819.6,594.5"/>
<polygon fill="#1967d2" points="750.7,628.9 758.7,624.3 769.0,620.9 773.6,615.1 782.8,608.2 790.9,608.2 795.5,603.6 803.5,603.6 803.5,609.4 812.7,618.6 817.3,610.5 819.6,602.5 825.3,619.7 831.1,628.9 835.7,640.4 833.4,651.9 826.5,661.1 819.6,671.4 810.4,674.9 801.2,671.4 797.8,658.8 792.0,659.9 785.1,653.0 772.5,654.2 763.3,658.8 749.5,659.9 750.7,647.3 749.5,635.8"/>
<polygon fill="#1967d2" points="805.8,684.0 811.6,684.0 805.8,689.8"/>
<polygon fill="#1967d2" points="871.9,676.2 879.0,680.2 873.9,683.2 870.9,689.2 866.9,687.2 869.9,681.2"/>
<polygon fill="#1967d2" points="864.9,689.2 861.9,694.3 852.8,701.3 847.8,703.3 846.8,700.3 856.8,694.3 862.9,689.2"/>
<polyline fill="none" stroke="#fff" stroke-width="1.2" points="725.6,518.1 724.5,525.0 726.7,529.6 738.2,535.3"/>
<polyline fill="none" stroke="#fff" stroke-width="1.2" points="716.4,525.0 724.5,525.0"/>
</svg>

<!-- table 1 -->
<div class="a hdr" style="left:906px;top:284px">COUNTRY</div>
<div class="a hdr" style="right:84px;top:284px">ACTIVE USERS</div>
<div class="dash" style="left:906px;top:312px;width:101px"></div>
<div class="dash" style="left:1296px;top:312px;width:156px"></div>
<div class="hline" style="left:906px;top:324px;width:546px"></div>

<div class="a row" style="left:906px;top:338.7px">United States</div>
<div class="a val" style="right:84px;top:338.7px">136K</div>
<div class="hline" style="left:906px;top:380.1px;width:546px"></div>
<div class="bar" style="left:907px;top:377.5px;width:141px"></div>
<div class="a row" style="left:906px;top:392.4px">India</div>
<div class="a val" style="right:84px;top:392.4px">106K</div>
<div class="hline" style="left:906px;top:433.8px;width:546px"></div>
<div class="bar" style="left:907px;top:431.2px;width:109px"></div>
<div class="a row" style="left:906px;top:446.1px">United Kingdom</div>
<div class="a val" style="right:84px;top:446.1px">34K</div>
<div class="hline" style="left:906px;top:487.5px;width:546px"></div>
<div class="bar" style="left:907px;top:484.9px;width:35px"></div>
<div class="a row" style="left:906px;top:499.8px">Pakistan</div>
<div class="a val" style="right:84px;top:499.8px">23K</div>
<div class="hline" style="left:906px;top:541.2px;width:546px"></div>
<div class="bar" style="left:907px;top:538.6px;width:24px"></div>
<div class="a row" style="left:906px;top:553.5px">Canada</div>
<div class="a val" style="right:84px;top:553.5px">17K</div>
<div class="hline" style="left:906px;top:594.9px;width:546px"></div>
<div class="bar" style="left:907px;top:592.3px;width:18px"></div>
<div class="a row" style="left:906px;top:607.2px">Bangladesh</div>
<div class="a val" style="right:84px;top:607.2px">13K</div>
<div class="hline" style="left:906px;top:648.6px;width:546px"></div>
<div class="bar" style="left:907px;top:646.0px;width:13px"></div>
<div class="a row" style="left:906px;top:660.9px">Germany</div>
<div class="a val" style="right:84px;top:660.9px">11K</div>
<div class="bar" style="left:907px;top:699.7px;width:11px"></div>

<div class="a" id="vc" style="left:1257.5px;top:782.1px;font-size:24px;color:#1a73e8;line-height:28px;letter-spacing:0.6px;-webkit-text-stroke:0.35px #1a73e8">View countries</div>

<svg class="a" style="left:1436px;top:780px" width="30" height="28" viewBox="1436 780 30 28"><path d="M1440.6 794.2H1459.5M1450.6 785.3L1459.5 794.2L1450.6 803.1" fill="none" stroke="#1a73e8" stroke-width="2.6"/></svg>
<!-- CARD 2 -->
<div class="card" style="left:42px;top:880px;width:781px;height:560px"></div>
<div class="a hdr" id="h2a" style="left:83px;top:925px;letter-spacing:-0.07px">ACTIVE USERS IN LAST 30 MINUTES</div>
<div class="dash" style="left:83px;top:953px;width:358px"></div>
<div class="a" id="big" style="left:81.7px;top:962px;font-size:60.5px;line-height:64px;color:#202124;transform:scaleX(0.905);transform-origin:0 0">159</div>
<div class="a" style="left:735px;top:922px;width:46px;height:46px;border:2px solid #dadce0;border-radius:50%"></div>
<svg class="a" style="left:741.9px;top:928.9px" width="32" height="32" viewBox="741.9 928.9 32 32"><circle cx="757.9" cy="944.9" r="12.3" fill="none" stroke="#188038" stroke-width="2.9"/><polyline points="750.6,946.0 755.3,950.6999999999999 765.1999999999999,940.0" fill="none" stroke="#188038" stroke-width="2.9"/></svg>
<div class="a hdr" id="h2b" style="left:83px;top:1061.5px;letter-spacing:-0.37px">ACTIVE USERS PER MINUTE</div>
<div class="a" style="left:106.90px;top:1173.90px;width:19.9px;height:2px;background:#1a73e8"></div>
<div class="a" style="left:128.65px;top:1171.90px;width:19.9px;height:4px;background:#1a73e8"></div>
<div class="a" style="left:150.40px;top:1169.90px;width:19.9px;height:6px;background:#1a73e8"></div>
<div class="a" style="left:172.15px;top:1114.90px;width:19.9px;height:61px;background:#1a73e8"></div>
<div class="a" style="left:193.90px;top:1173.90px;width:19.9px;height:2px;background:#1a73e8"></div>
<div class="a" style="left:215.65px;top:1167.40px;width:19.9px;height:8.5px;background:#1a73e8"></div>
<div class="a" style="left:237.40px;top:1174.3px;width:19.9px;height:1.5px;background:#dadce0"></div>
<div class="a" style="left:259.15px;top:1167.40px;width:19.9px;height:8.5px;background:#1a73e8"></div>
<div class="a" style="left:280.90px;top:1106.90px;width:19.9px;height:69px;background:#1a73e8"></div>
<div class="a" style="left:302.65px;top:1163.40px;width:19.9px;height:12.5px;background:#1a73e8"></div>
<div class="a" style="left:324.40px;top:1163.40px;width:19.9px;height:12.5px;background:#1a73e8"></div>
<div class="a" style="left:346.15px;top:1163.40px;width:19.9px;height:12.5px;background:#1a73e8"></div>
<div class="a" style="left:367.90px;top:1169.90px;width:19.9px;height:6px;background:#1a73e8"></div>
<div class="a" style="left:389.65px;top:1131.90px;width:19.9px;height:44px;background:#1a73e8"></div>
<div class="a" style="left:411.40px;top:1163.40px;width:19.9px;height:12.5px;background:#1a73e8"></div>
<div class="a" style="left:433.15px;top:1167.40px;width:19.9px;height:8.5px;background:#1a73e8"></div>
<div class="a" style="left:454.90px;top:1164.90px;width:19.9px;height:11px;background:#1a73e8"></div>
<div class="a" style="left:476.65px;top:1169.90px;width:19.9px;height:6px;background:#1a73e8"></div>
<div class="a" style="left:498.40px;top:1141.90px;width:19.9px;height:34px;background:#1a73e8"></div>
<div class="a" style="left:520.15px;top:1171.90px;width:19.9px;height:4px;background:#1a73e8"></div>
<div class="a" style="left:541.90px;top:1154.90px;width:19.9px;height:21px;background:#1a73e8"></div>
<div class="a" style="left:563.65px;top:1169.90px;width:19.9px;height:6px;background:#1a73e8"></div>
<div class="a" style="left:585.40px;top:1173.90px;width:19.9px;height:2px;background:#1a73e8"></div>
<div class="a" style="left:607.15px;top:1167.40px;width:19.9px;height:8.5px;background:#1a73e8"></div>
<div class="a" style="left:628.90px;top:1164.90px;width:19.9px;height:11px;background:#1a73e8"></div>
<div class="a" style="left:650.65px;top:1171.90px;width:19.9px;height:4px;background:#1a73e8"></div>
<div class="a" style="left:672.40px;top:1169.90px;width:19.9px;height:6px;background:#1a73e8"></div>
<div class="a" style="left:694.15px;top:1171.90px;width:19.9px;height:4px;background:#1a73e8"></div>
<div class="a" style="left:715.90px;top:1167.40px;width:19.9px;height:8.5px;background:#1a73e8"></div>
<div class="a" style="left:737.65px;top:1174.3px;width:19.9px;height:1.5px;background:#aecbfa"></div>
<div class="a hdr" id="h2c" style="left:83px;top:1196px;letter-spacing:0.32px">TOP COUNTRIES</div>
<div class="a hdr" style="right:755px;top:1196px">ACTIVE USERS</div>
<div class="dash" style="left:83px;top:1223px;width:173px"></div>
<div class="dash" style="left:626px;top:1223px;width:155px"></div>
<div class="hline" style="left:83px;top:1235px;width:698px"></div>
<div class="a row" style="left:83px;top:1246.4px">India</div>
<div class="a val" style="right:755px;top:1246.4px">27</div>
<div class="hline" style="left:83px;top:1286.3px;width:698px"></div>
<div class="bar" style="left:85px;top:1283.7px;width:119px"></div>
<div class="a row" style="left:83px;top:1295.2px">Pakistan</div>
<div class="a val" style="right:755px;top:1295.2px">27</div>
<div class="hline" style="left:83px;top:1335.1px;width:698px"></div>
<div class="bar" style="left:85px;top:1332.5px;width:119px"></div>
<div class="a row" style="left:83px;top:1344.0px">United States</div>
<div class="a val" style="right:755px;top:1344.0px">15</div>
<div class="hline" style="left:83px;top:1383.9px;width:698px"></div>
<div class="bar" style="left:85px;top:1381.3px;width:66px"></div>

<!-- CARD 3 -->
<div class="card" style="left:848px;top:880px;width:647px;height:560px"></div>
<div class="a ttl" id="t3" style="left:890px;top:924.3px;-webkit-text-stroke:0.45px #202124">Active users</div>
<div class="a ttl" id="t3b" style="left:1050px;top:924.3px;color:#3c4043;letter-spacing:0.4px">by City</div>
<div class="dash" style="left:1082px;top:953px;width:46px"></div>
<div class="a" style="left:1352px;top:922px;width:100px;height:46px;border:2px solid #dadce0;border-radius:23px"></div>
<svg class="a" style="left:1364.5px;top:928.7px" width="32" height="32" viewBox="1364.5 928.7 32 32"><circle cx="1380.5" cy="944.7" r="12.3" fill="none" stroke="#188038" stroke-width="2.9"/><polyline points="1373.2,945.8000000000001 1377.9,950.5 1387.8,939.8000000000001" fill="none" stroke="#188038" stroke-width="2.9"/></svg><svg class="a" style="left:1417px;top:942px" width="14" height="7" viewBox="0 0 14 7"><path d="M0 0H14L7.0 7Z" fill="#5f6368"/></svg><svg class="a" style="left:1026px;top:935px" width="15.6" height="8" viewBox="0 0 15.6 8"><path d="M0 0H15.6L7.8 8Z" fill="#757575"/></svg>
<div class="a hdr" id="h3a" style="left:889px;top:999px;letter-spacing:0.5px">CITY</div>
<div class="a hdr" style="right:84px;top:999px">ACTIVE USERS</div>
<div class="dash" style="left:889px;top:1027px;width:49px"></div>
<div class="dash" style="left:1296px;top:1027px;width:156px"></div>
<div class="hline" style="left:889px;top:1039px;width:563px"></div>
<div class="a row" style="left:889px;top:1053.2px">London</div>
<div class="a val" style="right:84px;top:1053.2px">10K</div>
<div class="hline" style="left:889px;top:1094.6px;width:563px"></div>
<div class="bar" style="left:890px;top:1092.0px;width:12px"></div>
<div class="a row" style="left:889px;top:1106.9px">New York</div>
<div class="a val" style="right:84px;top:1106.9px">8.1K</div>
<div class="hline" style="left:889px;top:1148.3px;width:563px"></div>
<div class="bar" style="left:890px;top:1145.7px;width:9px"></div>
<div class="a row" style="left:889px;top:1160.6px">Delhi</div>
<div class="a val" style="right:84px;top:1160.6px">7K</div>
<div class="hline" style="left:889px;top:1202.0px;width:563px"></div>
<div class="bar" style="left:890px;top:1199.4px;width:8px"></div>
<div class="a row" style="left:889px;top:1214.3px">Bengaluru</div>
<div class="a val" style="right:84px;top:1214.3px">6.4K</div>
<div class="hline" style="left:889px;top:1255.7px;width:563px"></div>
<div class="bar" style="left:890px;top:1253.1px;width:8px"></div>
<div class="a row" style="left:889px;top:1268.0px">Lahore</div>
<div class="a val" style="right:84px;top:1268.0px">6.1K</div>
<div class="hline" style="left:889px;top:1309.4px;width:563px"></div>
<div class="bar" style="left:890px;top:1306.8px;width:7px"></div>
<div class="a row" style="left:889px;top:1321.7px">Mumbai</div>
<div class="a val" style="right:84px;top:1321.7px">6K</div>
<div class="hline" style="left:889px;top:1363.1px;width:563px"></div>
<div class="bar" style="left:890px;top:1360.5px;width:7px"></div>

<!-- bottom fade -->
<div class="a" style="left:0;top:1230px;width:1536px;height:163px;background:linear-gradient(to bottom,rgba(248,249,250,0) 0px,rgba(248,249,250,1) 137px,#f8f9fa 163px)"></div>
</body></html>
